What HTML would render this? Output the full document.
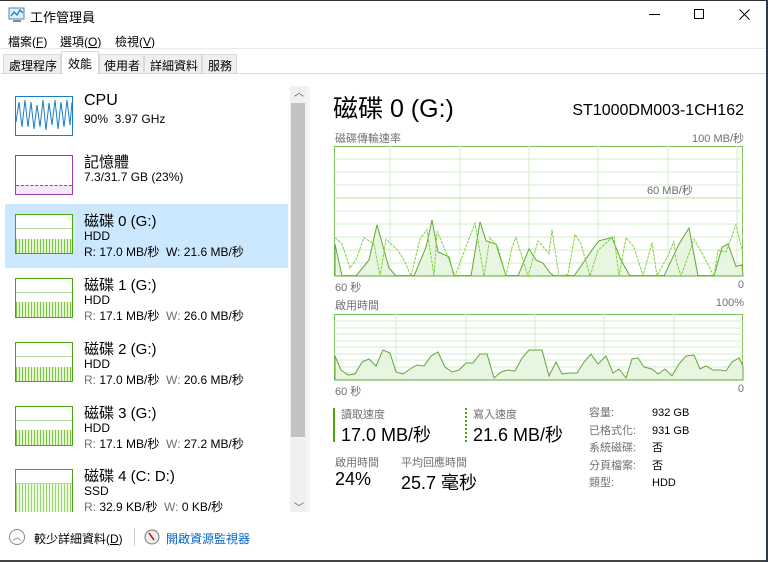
<!DOCTYPE html>
<html><head><meta charset="utf-8">
<style>
*{margin:0;padding:0;box-sizing:border-box}
body{width:768px;height:562px;overflow:hidden;background:#fff;font-family:"Liberation Sans","Noto Sans CJK TC",sans-serif;color:#000;position:relative}
.a{position:absolute;white-space:nowrap}
.t{font-size:12px}
.g{color:#707070}
.thumb{position:absolute;left:15px;width:58px;height:40px;border:1px solid #4da60c;background:#fff}
</style></head><body>
<div style="position:absolute;left:0;top:0;width:768px;height:1px;background:#333"></div>
<svg class="a" style="left:8px;top:7px" width="18" height="16"><rect x="1" y="1" width="15" height="11" fill="#dff0f8" stroke="#4a8ab8"/><polyline points="3,9 6,5 9,8 12,3 15,6" fill="none" stroke="#2b78c2" stroke-width="1.3"/><rect x="5" y="13" width="8" height="2" fill="#888"/></svg>
<div class="a" style="left:30px;top:7px;font-size:13px">工作管理員</div>
<div class="a" style="left:649px;top:14px;width:11px;height:1px;background:#000"></div>
<div class="a" style="left:694px;top:9px;width:10px;height:10px;border:1px solid #000"></div>
<svg class="a" style="left:739px;top:9px" width="11" height="11"><path d="M0.5 0.5L10.5 10.5M10.5 0.5L0.5 10.5" stroke="#000" stroke-width="1"/></svg>
<div class="a t" style="left:8px;top:33px">檔案(<u>F</u>)</div>
<div class="a t" style="left:60px;top:33px">選項(<u>O</u>)</div>
<div class="a t" style="left:115px;top:33px">檢視(<u>V</u>)</div>
<div class="a" style="left:0;top:48px;width:768px;height:1px;background:#eaeaea"></div>
<div class="a" style="left:0;top:73px;width:768px;height:1px;background:#d9d9d9"></div>
<div class="a t" style="left:3px;top:54px;width:58px;height:20px;background:#f0f0f0;border:1px solid #d9d9d9;padding:2px 0 0 5px">處理程序</div>
<div class="a t" style="left:61px;top:51px;width:38px;height:23px;background:#fff;border:1px solid #d9d9d9;border-bottom:none;padding:3px 0 0 6px">效能</div>
<div class="a t" style="left:99px;top:54px;width:45px;height:20px;background:#f0f0f0;border:1px solid #d9d9d9;padding:2px 0 0 4px">使用者</div>
<div class="a t" style="left:144px;top:54px;width:58px;height:20px;background:#f0f0f0;border:1px solid #d9d9d9;padding:2px 0 0 5px">詳細資料</div>
<div class="a t" style="left:202px;top:54px;width:35px;height:20px;background:#f0f0f0;border:1px solid #d9d9d9;padding:2px 0 0 5px">服務</div>

<div class="thumb" style="top:96px;border-color:#1a7dc4"><svg width="56" height="38"><polyline points="0,25 3,5 6,30 9,3 12,30 15,5 18,32 21,8 24,30 27,3 30,33 33,6 36,28 39,3 42,32 45,5 48,30 51,3 54,28 56,5" fill="none" stroke="#1a7dc4"/></svg></div>
<div class="a" style="left:84px;top:92px;font-size:16px">CPU</div>
<div class="a t" style="left:84px;top:112px">90%&nbsp; 3.97 GHz</div>
<div class="thumb" style="top:155px;border-color:#9d3bb5"><div style="position:absolute;left:0;right:0;bottom:0;height:9px;background:#f3e8f6;border-top:1px dashed #9d3bb5"></div></div>
<div class="a" style="left:84px;top:151px;font-size:15px">記憶體</div>
<div class="a t" style="left:84px;top:170px">7.3/31.7 GB (23%)</div>
<div class="a" style="left:5px;top:204px;width:283px;height:64px;background:#cce8ff"></div>
<div class="thumb" style="top:214px"><div style="position:absolute;left:0;right:0;top:13px;height:1px;background:#b9dd9f"></div><div style="position:absolute;left:0;right:0;bottom:0;height:14px;background:repeating-linear-gradient(90deg,#7cc83c 0 1px,#e6f4da 1px 3px)"></div></div>
<div class="a" style="left:84px;top:210px;font-size:15px">磁碟 0 (G:)</div>
<div class="a t" style="left:84px;top:229px">HDD</div>
<div class="a t" style="left:84px;top:243px">R: 17.0 MB/秒&nbsp; W: 21.6 MB/秒</div>

<div class="thumb" style="top:278px"><div style="position:absolute;left:0;right:0;top:13px;height:1px;background:#b9dd9f"></div><div style="position:absolute;left:0;right:0;bottom:0;height:15px;background:repeating-linear-gradient(90deg,#7cc83c 0 1px,#e6f4da 1px 3px)"></div></div>
<div class="a" style="left:84px;top:274px;font-size:15px">磁碟 1 (G:)</div>
<div class="a t" style="left:84px;top:293px">HDD</div>
<div class="a t" style="left:84px;top:307px"><span class="g">R:</span> 17.1 MB/秒&nbsp; <span class="g">W:</span> 26.0 MB/秒</div>

<div class="thumb" style="top:342px"><div style="position:absolute;left:0;right:0;top:13px;height:1px;background:#b9dd9f"></div><div style="position:absolute;left:0;right:0;bottom:0;height:14px;background:repeating-linear-gradient(90deg,#7cc83c 0 1px,#e6f4da 1px 3px)"></div></div>
<div class="a" style="left:84px;top:338px;font-size:15px">磁碟 2 (G:)</div>
<div class="a t" style="left:84px;top:357px">HDD</div>
<div class="a t" style="left:84px;top:371px"><span class="g">R:</span> 17.0 MB/秒&nbsp; <span class="g">W:</span> 20.6 MB/秒</div>

<div class="thumb" style="top:406px"><div style="position:absolute;left:0;right:0;top:13px;height:1px;background:#b9dd9f"></div><div style="position:absolute;left:0;right:0;bottom:0;height:15px;background:repeating-linear-gradient(90deg,#7cc83c 0 1px,#e6f4da 1px 3px)"></div></div>
<div class="a" style="left:84px;top:402px;font-size:15px">磁碟 3 (G:)</div>
<div class="a t" style="left:84px;top:421px">HDD</div>
<div class="a t" style="left:84px;top:435px"><span class="g">R:</span> 17.1 MB/秒&nbsp; <span class="g">W:</span> 27.2 MB/秒</div>

<div class="thumb" style="top:469px;height:43px;border-bottom:none"><div style="position:absolute;left:0;right:0;top:13px;height:1px;background:#b9dd9f"></div><div style="position:absolute;left:0;right:0;bottom:0;height:28px;background:repeating-linear-gradient(90deg,#9bd66a 0 1px,#eef8e6 1px 3px)"></div></div>
<div class="a" style="left:84px;top:465px;font-size:15px">磁碟 4 (C: D:)</div>
<div class="a t" style="left:84px;top:484px">SSD</div>
<div class="a t" style="left:84px;top:498px"><span class="g">R:</span> 32.9 KB/秒&nbsp; <span class="g">W:</span> 0 KB/秒</div>

<div class="a" style="left:290px;top:86px;width:16px;height:426px;background:#f0f0f0"></div>
<div class="a" style="left:291px;top:103px;width:14px;height:334px;background:#c2c2c2"></div>
<div class="a" style="left:294px;top:84px;font-size:10px;color:#555">︿</div>
<div class="a" style="left:294px;top:499px;font-size:10px;color:#555">﹀</div>
<div class="a" style="left:306px;top:86px;width:4px;height:426px;background:#f4f4f4"></div>

<div class="a" style="left:333px;top:89px;font-size:25px">磁碟 0 (G:)</div>
<div class="a" style="right:24px;top:102px;font-size:16px">ST1000DM003-1CH162</div>
<div class="a g" style="left:335px;top:130px;font-size:11px">磁碟傳輸速率</div>
<div class="a g" style="right:24px;top:130px;font-size:11px">100 MB/秒</div>
<svg class="a" style="left:334px;top:146px" width="410" height="131">
<rect x="0.5" y="0.5" width="408" height="129" fill="#fff" stroke="#7cc35a"/>
<g stroke="#d6ecc8" stroke-width="1">
<line x1="0" y1="13" x2="409" y2="13"/><line x1="0" y1="26" x2="409" y2="26"/><line x1="0" y1="39" x2="409" y2="39"/><line x1="0" y1="65" x2="409" y2="65"/><line x1="0" y1="78" x2="409" y2="78"/><line x1="0" y1="91" x2="409" y2="91"/><line x1="0" y1="104" x2="409" y2="104"/><line x1="0" y1="117" x2="409" y2="117"/>
<line x1="56" y1="0" x2="56" y2="130"/><line x1="126" y1="0" x2="126" y2="130"/><line x1="195" y1="0" x2="195" y2="130"/><line x1="264" y1="0" x2="264" y2="130"/><line x1="334" y1="0" x2="334" y2="130"/><line x1="403" y1="0" x2="403" y2="130"/>
</g>
<line x1="0" y1="52" x2="409" y2="52" stroke="#b9dd9f"/>
<g transform="translate(0,130) scale(1,1.6) translate(0,-130)">
<polygon vector-effect="non-scaling-stroke" points="1,110 8,130 22,130 35,120 43,98 55,125 62,130 72,130 80,130 92,112 98,95 104,115 115,118 120,130 137,130 146,96 152,108 162,110 172,130 184,130 195,113 202,120 209,122 216,128 220,130 240,130 260,112 265,108 278,106 287,120 296,130 330,130 336,122 345,110 355,100 364,130 380,130 388,112 394,110 402,124 408,123 409,130 1,130" fill="#e8f5e0" stroke="#5fa83a" stroke-width="1"/>
<polyline vector-effect="non-scaling-stroke" points="1,106 8,110 16,125 22,120 30,106 40,110 46,130 52,107 64,114 70,120 77,130 86,107 93,101 100,130 103,102 112,115 121,130 130,115 141,97 150,130 156,106 164,112 172,130 178,112 182,106 194,130 204,108 215,116 218,101 225,130 234,129 241,104 247,110 256,130 264,114 280,105 285,130 292,106 300,112 309,130 318,109 323,130 335,116 340,108 342,120 347,130 360,107 370,118 380,130 384,114 392,115 402,98 409,116" fill="none" stroke="#7fd33f" stroke-width="1" stroke-dasharray="3,1"/>
</g>
</svg>
<div class="a g" style="left:647px;top:182px;font-size:11px">60 MB/秒</div>
<div class="a g" style="left:335px;top:279px;font-size:11px">60 秒</div>
<div class="a g" style="right:24px;top:279px;font-size:11px">0</div>
<div class="a g" style="left:335px;top:297px;font-size:11px">啟用時間</div>
<div class="a g" style="right:24px;top:297px;font-size:11px">100%</div>
<svg class="a" style="left:334px;top:314px" width="410" height="67">
<rect x="0.5" y="0.5" width="408" height="65" fill="#fff" stroke="#7cc35a"/>
<g stroke="#d6ecc8"><line x1="0" y1="7" x2="409" y2="7"/><line x1="0" y1="14" x2="409" y2="14"/><line x1="0" y1="20" x2="409" y2="20"/><line x1="0" y1="27" x2="409" y2="27"/><line x1="0" y1="33" x2="409" y2="33"/><line x1="0" y1="40" x2="409" y2="40"/><line x1="0" y1="46" x2="409" y2="46"/><line x1="0" y1="53" x2="409" y2="53"/><line x1="0" y1="59" x2="409" y2="59"/>
<line x1="62" y1="0" x2="62" y2="66"/><line x1="132" y1="0" x2="132" y2="66"/><line x1="201" y1="0" x2="201" y2="66"/><line x1="270" y1="0" x2="270" y2="66"/><line x1="340" y1="0" x2="340" y2="66"/></g>
<polygon points="1,42 7,56 14,61 21,60 28,48 35,45 42,52 49,36 56,39 62,58 69,60 76,55 83,51 90,52 97,42 104,38 111,53 118,58 125,56 132,49 139,49 146,40 153,40 160,64 167,58 174,56 181,57 188,44 195,36 208,36 215,62 222,48 228,60 236,59 243,59 250,48 257,40 264,50 272,42 279,59 285,55 292,64 298,45 304,44 310,53 318,55 324,60 331,55 338,62 345,50 352,42 360,41 366,55 372,52 379,56 386,56 392,57 398,48 405,44 409,52 409,66 1,66" fill="#e8f5e0" stroke="#5fa83a"/>
</svg>
<div class="a g" style="left:335px;top:383px;font-size:11px">60 秒</div>
<div class="a g" style="right:24px;top:383px;font-size:11px">0</div>

<div class="a" style="left:333px;top:408px;width:2px;height:34px;background:#4da60c"></div>
<div class="a g" style="left:341px;top:406px;font-size:11px">讀取速度</div>
<div class="a" style="left:341px;top:421px;font-size:18px">17.0 MB/秒</div>
<div class="a" style="left:465px;top:408px;height:34px;border-left:2px dotted #4da60c"></div>
<div class="a g" style="left:473px;top:406px;font-size:11px">寫入速度</div>
<div class="a" style="left:473px;top:421px;font-size:18px">21.6 MB/秒</div>
<div class="a g" style="left:335px;top:454px;font-size:11px">啟用時間</div>
<div class="a" style="left:335px;top:469px;font-size:18px">24%</div>
<div class="a g" style="left:401px;top:454px;font-size:11px">平均回應時間</div>
<div class="a" style="left:401px;top:469px;font-size:18px">25.7 毫秒</div>
<div class="a g" style="left:589px;top:405px;font-size:11px;line-height:17.5px">容量:<br>已格式化:<br>系統磁碟:<br>分頁檔案:<br>類型:</div>
<div class="a" style="left:652px;top:405px;font-size:11px;line-height:17.5px">932 GB<br>931 GB<br>否<br>否<br>HDD</div>

<div class="a" style="left:9px;top:529px;width:16px;height:16px;border:1px solid #888;border-radius:50%;font-size:9px;color:#666;text-align:center;line-height:14px">︿</div>
<div class="a t" style="left:34px;top:530px">較少詳細資料(<u>D</u>)</div>
<div class="a" style="left:134px;top:528px;width:1px;height:18px;background:#ccc"></div>
<svg class="a" style="left:144px;top:529px" width="16" height="16"><circle cx="8" cy="8" r="7" fill="#eee" stroke="#777"/><line x1="5" y1="4" x2="10" y2="11" stroke="#c00" stroke-width="1.5"/></svg>
<div class="a t" style="left:166px;top:530px;color:#0066cc">開啟資源監視器</div>
<div class="a" style="left:0;top:560px;width:768px;height:2px;background:#444"></div>
<div class="a" style="left:766px;top:0;width:2px;height:562px;background:#2a3a4a"></div>
</body></html>
